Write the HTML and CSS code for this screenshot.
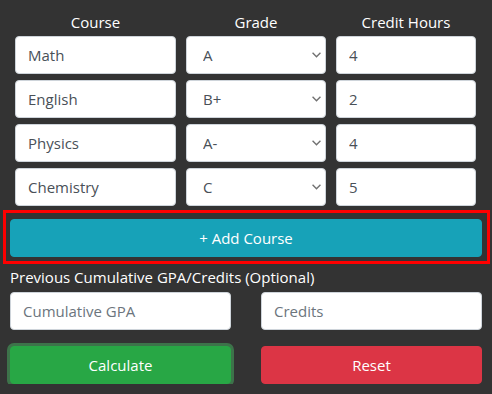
FILE: index.html
```html
<!DOCTYPE html>
<html lang="en">
<head>
  <meta charset="UTF-8">
  <meta name="viewport" content="width=device-width, initial-scale=1.0">
  <title>GPA Calculator</title>
  <link rel="stylesheet" href="styles.css">
</head>
<body>
  <div class="calc">
    <!-- course rows -->
    <div class="course-grid">
      <div class="col-head">Course</div>
      <div class="col-head">Grade</div>
      <div class="col-head">Credit Hours</div>

      <input class="field" type="text" value="Math">
      <div class="select-wrap">
        <select class="field"><option>A</option></select>
        <svg class="chev" viewBox="0 0 8 5"><path d="M0.5 0.5 L4 4 L7.5 0.5"/></svg>
      </div>
      <input class="field" type="text" value="4">

      <input class="field" type="text" value="English">
      <div class="select-wrap">
        <select class="field"><option>B+</option></select>
        <svg class="chev" viewBox="0 0 8 5"><path d="M0.5 0.5 L4 4 L7.5 0.5"/></svg>
      </div>
      <input class="field" type="text" value="2">

      <input class="field" type="text" value="Physics">
      <div class="select-wrap">
        <select class="field"><option>A-</option></select>
        <svg class="chev" viewBox="0 0 8 5"><path d="M0.5 0.5 L4 4 L7.5 0.5"/></svg>
      </div>
      <input class="field" type="text" value="4">

      <input class="field" type="text" value="Chemistry">
      <div class="select-wrap">
        <select class="field"><option>C</option></select>
        <svg class="chev" viewBox="0 0 8 5"><path d="M0.5 0.5 L4 4 L7.5 0.5"/></svg>
      </div>
      <input class="field" type="text" value="5">
    </div>

    <div class="add-box">
      <button class="btn btn-info">+ Add Course</button>
    </div>

    <div class="prev">
      <label class="prev-label">Previous Cumulative GPA/Credits (Optional)</label>
      <div class="two-col">
        <input class="field" type="text" placeholder="Cumulative GPA">
        <input class="field" type="text" placeholder="Credits">
      </div>
      <div class="two-col actions">
        <button class="btn btn-success focus">Calculate</button>
        <button class="btn btn-danger">Reset</button>
      </div>
    </div>
  </div>
</body>
</html>
```

FILE: styles.css
```css
* {
  margin: 0;
  padding: 0;
  box-sizing: border-box;
}
body {
  font-family: "Open Sans", "Noto Sans", sans-serif;
  font-size: 15px;
  background-color: #333;
  color: #fff;
  line-height: 24px;
}

.calc {
  width: 492px;
  padding-top: 10px;
}

/* コース入力 */
.course-grid {
  display: grid;
  grid-template-columns: 161px 140px 140px;
  column-gap: 10px;
  row-gap: 6px;
  padding: 0 15px;
}
.col-head {
  text-align: center;
  margin-bottom: -4px;
}

.field {
  display: block;
  width: 100%;
  height: 38px;
  padding: 6px 12px;
  font-family: inherit;
  font-size: 15px;
  line-height: 24px;
  color: #495057;
  background-color: #fff;
  border: 1px solid #ced4da;
  border-radius: 4px;
}
.field::placeholder {
  color: #6c757d;
}

.select-wrap {
  position: relative;
}
.select-wrap select {
  appearance: none;
  -webkit-appearance: none;
  padding-left: 16px;
}
.chev {
  position: absolute;
  right: 5px;
  top: 16px;
  width: 9px;
  height: 6px;
  fill: none;
  stroke: #707070;
  stroke-width: 1.2;
  pointer-events: none;
}

/* ボタン */
.btn {
  display: block;
  width: 100%;
  height: 38px;
  font-family: inherit;
  font-size: 15px;
  line-height: 24px;
  color: #fff;
  border: 1px solid transparent;
  border-radius: 4px;
  cursor: pointer;
}
.btn-info {
  background-color: #17a2b8;
  border-color: #17a2b8;
}
.btn-success {
  background-color: #28a745;
  border-color: #28a745;
}
.btn-danger {
  background-color: #dc3545;
  border-color: #dc3545;
}
.btn.focus {
  box-shadow: 0 0 0 3px rgba(72, 180, 97, 0.5);
}

.add-box {
  margin: 4px 2px 0 3px;
  border: 3px solid #f00;
  padding: 6px 5px 4px 4px;
}

.prev {
  padding: 0 10px;
}
.prev-label {
  display: block;
  margin: 1px 0 3px;
}
.two-col {
  display: grid;
  grid-template-columns: 1fr 1fr;
  column-gap: 30px;
}
.actions {
  margin-top: 16px;
}
```
